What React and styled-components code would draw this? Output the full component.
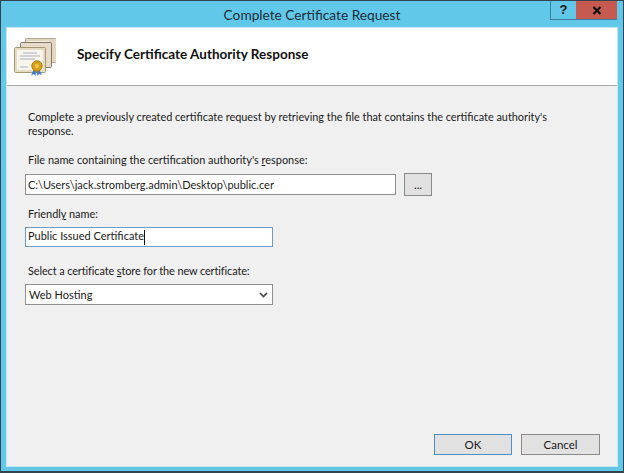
import React from "react";
import styled, { createGlobalStyle } from "styled-components";

const GlobalStyle = createGlobalStyle`
  html, body {
    margin: 0;
    padding: 0;
    background: #62c8ea;
  }
`;

const Window = styled.div`
  box-sizing: border-box;
  width: 624px;
  height: 473px;
  display: flex;
  flex-direction: column;
  background: #62c8ea;
  border: 1px solid #34444f;
  border-bottom-width: 2px;
  font-family: Lato, "Noto Sans", sans-serif;
  color: #1a1a1a;
`;

const TitleBar = styled.div`
  height: 27px;
  flex: none;
  display: flex;
  align-items: flex-start;
  justify-content: center;
  position: relative;
`;

const Title = styled.div`
  font-size: 13.7px;
  line-height: 27px;
  color: #1c2c38;
`;

const Controls = styled.div`
  position: absolute;
  top: 0;
  right: 6px;
  display: flex;
  height: 19px;
`;

const HelpButton = styled.div`
  box-sizing: border-box;
  width: 26px;
  border: 1px solid #3b7f9c;
  border-top: none;
  border-right: none;
  font: bold 13px/17px "Liberation Sans", sans-serif;
  color: #111;
  text-align: center;
`;

const CloseButton = styled.div`
  width: 41px;
  background: #c75a50;
  border-bottom: 1px solid #3b7f9c;
  display: flex;
  align-items: center;
  justify-content: center;
`;

const Content = styled.div`
  flex: 1;
  margin: 0 6px 5px;
  display: flex;
  flex-direction: column;
  background: #f0f0f0;
  box-shadow: 0 0 0 1px #c9e6f1;
`;

const Header = styled.div`
  height: 57px;
  flex: none;
  background: #fff;
  border-bottom: 1px solid #a9a9a9;
  display: flex;
  align-items: center;
  padding-left: 5px;
`;

const HeaderTitle = styled.div`
  margin-left: 21px;
  margin-top: -6px;
  font-size: 13.5px;
  font-weight: 700;
  color: #111;
`;

const Body = styled.div`
  flex: 1;
  display: flex;
  flex-direction: column;
  padding: 24px 17px 11px 18px;
`;

const Intro = styled.p`
  margin: 0 0 15px 3px;
  font-size: 10.88px;
  line-height: 14px;
  width: 560px;
`;

const Label = styled.label`
  display: block;
  margin: 0 0 6px 3px;
  font-size: 10.92px;
  line-height: 14px;
  white-space: nowrap;
  letter-spacing: ${(p) => (p.$tight ? "-0.1px" : "0")};
`;

const Field = styled.div`
  box-sizing: border-box;
  width: ${(p) => p.$width}px;
  height: ${(p) => p.$height || 21}px;
  display: flex;
  align-items: center;
  justify-content: space-between;
  padding: 0 4px 0 ${(p) => p.$inset || 2}px;
  background: #fff;
  border: 1px solid ${(p) => (p.$focused ? "#6a9cc4" : "#8f8f8f")};
  font-size: 11px;
  white-space: nowrap;
  margin-bottom: ${(p) => p.$gap}px;
`;

const Caret = styled.span`
  display: inline-block;
  width: 1px;
  height: 15px;
  background: #111;
  vertical-align: middle;
`;

const FileRow = styled.div`
  display: flex;
  align-items: center;
  gap: 8px;
  margin-bottom: 11px;
`;

const Button = styled.div`
  box-sizing: border-box;
  width: ${(p) => p.$width}px;
  height: ${(p) => p.$height}px;
  display: flex;
  align-items: center;
  justify-content: center;
  background: #e1e1e1;
  border: 1px solid ${(p) => (p.$primary ? "#4f8fbf" : "#8a8a8a")};
  font-size: 11.5px;
`;

const Footer = styled.div`
  margin-top: auto;
  display: flex;
  justify-content: flex-end;
  gap: 9px;
`;

const CertIcon = () => (
  <svg width="44" height="44" viewBox="0 0 44 44">
    <rect x="13.5" y="3.5" width="31" height="24" rx="1" fill="#e2d6bf" stroke="#b3a68e" />
    <rect x="8.5" y="7.5" width="31" height="25" rx="1" fill="#e6dbc6" stroke="#7f7668" />
    <rect x="15" y="6" width="22" height="1" fill="#f5f0e4" />
    <rect x="2.5" y="12.5" width="31" height="25" rx="1" fill="#e6dac3" stroke="#a59678" />
    <rect x="5" y="15" width="26" height="20" fill="#f7f5ee" />
    <path d="M11 18h14M8 21h20M8 24h15M8 32h8" stroke="#a9b0b8" strokeWidth="1" />
    <path d="M22 34l-3 6.5 3-1.5 1.5 2 1-6zM27 34l3 6-3-1-1.5 2-1-6z" fill="#3f7fd0" />
    <circle cx="25" cy="31" r="5.2" fill="#d69f17" stroke="#b27f0e" />
    <circle cx="25" cy="31" r="2.2" fill="#eec24a" />
  </svg>
);

const App = () => {
  return (
    <>
      <GlobalStyle />
      <Window>
        <TitleBar>
          <Title>Complete Certificate Request</Title>
          <Controls>
            <HelpButton>?</HelpButton>
            <CloseButton>
              <svg width="10" height="9" viewBox="0 0 10 9">
                <path d="M1.5 1l7 7M8.5 1l-7 7" stroke="#111" strokeWidth="2.2" />
              </svg>
            </CloseButton>
          </Controls>
        </TitleBar>
        <Content>
          <Header>
            <CertIcon />
            <HeaderTitle>Specify Certificate Authority Response</HeaderTitle>
          </Header>
          <Body>
            <Intro>
              Complete a previously created certificate request by retrieving the file that contains the certificate authority's response.
            </Intro>
            <Label>
              File name containing the certification authority's <u>r</u>esponse:
            </Label>
            <FileRow>
              <Field $width={371} $gap={0}>C:\Users\jack.stromberg.admin\Desktop\public.cer</Field>
              <Button $width={28} $height={23}>...</Button>
            </FileRow>
            <Label>
              Friendl<u>y</u> name:
            </Label>
            <Field $width={248} $height={20} $gap={17} $focused>
              <span>Public Issued Certificate<Caret /></span>
            </Field>
            <Label $tight>
              Select a certificate <u>s</u>tore for the new certificate:
            </Label>
            <Field $width={248} $gap={0} $inset={3}>
              Web Hosting
              <svg width="9" height="6" viewBox="0 0 9 6">
                <path d="M1 1l3.5 3.5L8 1" fill="none" stroke="#444" strokeWidth="1.6" />
              </svg>
            </Field>
            <Footer>
              <Button $width={78} $height={21} $primary>OK</Button>
              <Button $width={79} $height={21}>Cancel</Button>
            </Footer>
          </Body>
        </Content>
      </Window>
    </>
  );
};

export default App;
